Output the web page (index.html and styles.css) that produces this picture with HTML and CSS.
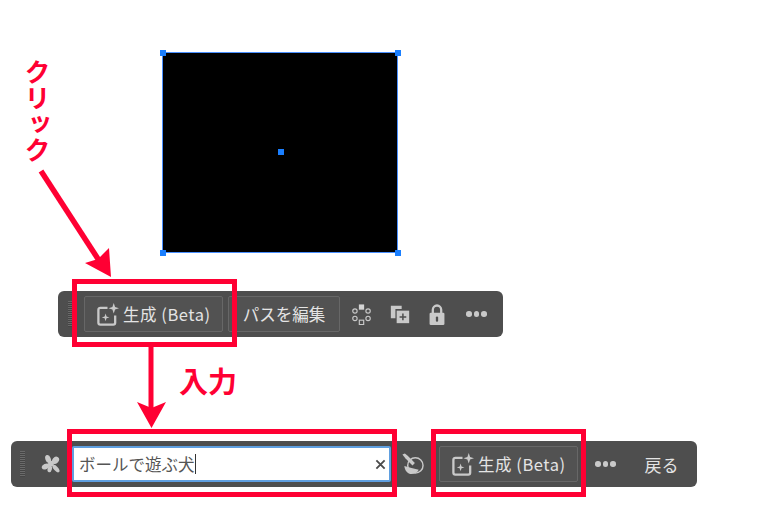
FILE: index.html
```html
<!DOCTYPE html>
<html lang="ja">
<head>
<meta charset="utf-8">
<title>生成 (Beta)</title>
<link rel="stylesheet" href="styles.css">
</head>
<body>
<main class="stage">
  <div class="artboard">
    <i class="handle tl"></i><i class="handle tr"></i><i class="handle bl"></i><i class="handle br"></i><i class="handle center"></i>
  </div>

  <div class="toolbar toolbar-top">
    <span class="grip"></span>
    <button class="btn btn-gen">
      <svg class="ico-gen" viewBox="0 0 24 24"><path d="M12 5H4.500A2 2 0 0 0 2.500 7v13.500a2 2 0 0 0 2 2h13.500a2 2 0 0 0 2-2V13" fill="none" stroke="#c9c9c9" stroke-width="2.400"/><path d="M18.500 0l1.400 4.100L24 5.500l-4.100 1.400L18.500 11l-1.400-4.100L13 5.500l4.100-1.400zM10 11l1 3 3 1-3 1-1 3-1-3-3-1 3-1z" fill="#c9c9c9"/></svg>
      <span>生成 (Beta)</span>
    </button>
    <button class="btn btn-path">パスを編集</button>
    <svg class="ico ico-ring" viewBox="0 0 24 24"><g fill="none" stroke="#c9c9c9" stroke-width="1.300"><circle cx="4.500" cy="8" r="2.500"/><circle cx="19.500" cy="8" r="2.500"/><circle cx="4.500" cy="16.500" r="2.500"/><circle cx="19.500" cy="16.500" r="2.500"/><rect x="9.500" y="18.500" width="5" height="5"/></g><rect x="9" y="0.500" width="6" height="6" fill="#d4d4d4"/></svg>
    <svg class="ico ico-copy" viewBox="0 0 24 24"><path d="M1 2h13v4H6.500v11H1z" fill="#c9c9c9"/><rect x="8" y="8" width="15" height="15" fill="#c9c9c9"/><path d="M15.500 11.500v8M11.500 15.500h8" stroke="#4e4e4e" stroke-width="1.800"/></svg>
    <svg class="ico ico-lock" viewBox="0 0 18 24"><path d="M4.200 11V6.500a4.800 4.800 0 0 1 9.600 0V11" fill="none" stroke="#c9c9c9" stroke-width="2.600"/><rect x="0.500" y="10" width="17" height="14" rx="1.500" fill="#c9c9c9"/><path d="M9 15.500v3.500" stroke="#4e4e4e" stroke-width="2.600" stroke-linecap="round"/></svg>
    <span class="dots"><i></i><i></i><i></i></span>
  </div>

  <div class="toolbar toolbar-bottom">
    <span class="grip"></span>
    <svg class="ico ico-flower" viewBox="0 0 24 24"><g fill="#c9c9c9"><ellipse cx="8.500" cy="6" rx="3.200" ry="5" transform="rotate(-20 8.500 6)"/><ellipse cx="17.500" cy="7.500" rx="3.800" ry="4.600" transform="rotate(40 17.500 7.500)"/><ellipse cx="5.500" cy="15" rx="3.200" ry="4.800" transform="rotate(65 5.500 15)"/><ellipse cx="18" cy="17.500" rx="2.600" ry="5.500" transform="rotate(-42 18 17.500)"/><ellipse cx="10.500" cy="18" rx="2.600" ry="4" transform="rotate(15 10.500 18)"/><circle cx="12" cy="11.500" r="3.500"/></g></svg>
    <label class="field">
      <span class="field-text">ボールで遊ぶ犬</span><span class="caret"></span>
      <svg class="clear" viewBox="0 0 12 12"><path d="M1.500 1.500l9 9M10.500 1.500l-9 9" stroke="#4a4a4a" stroke-width="2"/></svg>
    </label>
    <svg class="ico ico-brush" viewBox="0 0 24 24"><circle cx="15" cy="13.500" r="8" fill="none" stroke="#c9c9c9" stroke-width="1.500"/><path d="M3.500 14c5 1.500 10 3 15 4-1.500 3-4.500 4.500-7.500 4.500-4 0-7-3.500-7.500-8.500z" fill="#c9c9c9"/><path d="M1.500 2l2.500-1 3 2.500 7.500 7.500-2.500 2.500-7.500-7.500z" fill="#c9c9c9"/></svg>
    <button class="btn btn-gen btn-gen-2">
      <svg class="ico-gen" viewBox="0 0 24 24"><path d="M12 5H4.500A2 2 0 0 0 2.500 7v13.500a2 2 0 0 0 2 2h13.500a2 2 0 0 0 2-2V13" fill="none" stroke="#c9c9c9" stroke-width="2.400"/><path d="M18.500 0l1.400 4.100L24 5.500l-4.100 1.400L18.500 11l-1.400-4.100L13 5.500l4.100-1.400zM10 11l1 3 3 1-3 1-1 3-1-3-3-1 3-1z" fill="#c9c9c9"/></svg>
      <span>生成 (Beta)</span>
    </button>
    <span class="dots dots-2"><i></i><i></i><i></i></span>
    <span class="back">戻る</span>
  </div>

  <svg class="arrows" viewBox="0 0 768 519">
    <path d="M41 171L100 262" stroke="#ff0033" stroke-width="5.500" fill="none"/>
    <path d="M111 277L85 263L98 259L109 248z" fill="#ff0033"/>
    <path d="M151 347V410" stroke="#ff0033" stroke-width="5" fill="none"/>
    <path d="M151.500 428L137 402L151.500 408L166 402z" fill="#ff0033"/>
  </svg>
  <span class="mark mark-a"></span>
  <span class="mark mark-b"></span>
  <span class="mark mark-c"></span>
  <span class="note note-click">クリック</span>
  <span class="note note-input">入力</span>
</main>
</body>
</html>
```
FILE: styles.css
```css
* { box-sizing: border-box; }
html, body { margin: 0; padding: 0; background: #fff; }
body { width: 768px; height: 519px; overflow: hidden; font-family: "Noto Sans CJK JP", "Liberation Sans", sans-serif; }
.stage { position: relative; width: 768px; height: 519px; padding-top: 52px; }

.artboard { position: relative; width: 236px; height: 201px; margin: 0 0 0 162px; background: #000; border: 1.500px solid #4a90ff; }
.handle { position: absolute; width: 6px; height: 6px; background: #1a7fff; }
.tl { left: -3.500px; top: -3.500px; }
.tr { right: -3.500px; top: -3.500px; }
.bl { left: -3.500px; bottom: -3.500px; }
.br { right: -3.500px; bottom: -3.500px; }
.center { left: 114.500px; top: 95.500px; }

.toolbar { display: flex; align-items: center; background: #4e4e4e; border-radius: 6px; height: 46px; color: #e4e4e4; }
.toolbar-top { width: 445px; margin: 38px 0 0 58px; padding-left: 10px; }
.toolbar-bottom { width: 686px; margin: 104px 0 0 11px; padding-left: 9px; }

.grip { width: 5px; height: 26px; background: repeating-linear-gradient(#6a6a6a 0 1px, #454545 1px 2px); flex: none; }

.btn { display: flex; align-items: center; justify-content: center; height: 36px; padding: 0; background: #525252; border: 1px solid #676767; border-radius: 2px; color: #e4e4e4; font: 400 16.500px "Noto Sans CJK JP", sans-serif; flex: none; }
.btn-gen { width: 139px; gap: 4px; margin-left: 11px; letter-spacing: .55px; justify-content: flex-start; padding-left: 11px; }
.btn-path { width: 112px; margin-left: 5px; }
.btn-gen-2 { margin-left: 15px; }
.ico-gen { width: 23px; height: 23px; flex: none; }

.ico { flex: none; display: block; }
.ico-ring { width: 21px; height: 21px; margin-left: 11px; }
.ico-copy { width: 20px; height: 20px; margin-left: 18px; }
.ico-lock { width: 16px; height: 21px; margin-left: 19px; }
.ico-flower { width: 20px; height: 20px; margin-left: 16px; }
.ico-brush { width: 23px; height: 24px; margin-left: 10px; }

.dots { display: flex; gap: 2px; margin-left: 21px; flex: none; }
.dots i { width: 5.500px; height: 5.500px; border-radius: 50%; background: #c9c9c9; }
.dots-2 { margin-left: 17px; }
.back { margin-left: 29px; font-size: 17px; color: #e4e4e4; flex: none; }

.field { display: flex; align-items: center; width: 319px; height: 36px; margin-left: 11px; padding: 0 3px 0 5px; background: #fff; border: 2px solid #5f9fe0; border-radius: 2px; color: #555; font-size: 16.500px; flex: none; }
.caret { width: 1px; height: 20px; background: #333; }
.clear { width: 11px; height: 11px; margin-left: auto; }

.arrows { position: absolute; inset: 0; width: 768px; height: 519px; pointer-events: none; }
.mark { position: absolute; border: 5px solid #ff0033; }
.mark-a { left: 72px; top: 279px; width: 165px; height: 68px; }
.mark-b { left: 67px; top: 429px; width: 330px; height: 68px; }
.mark-c { left: 431px; top: 429px; width: 155px; height: 68px; }

.note { position: absolute; color: #ff0033; font-weight: 700; line-height: 1; white-space: nowrap; }
.note-click { left: 24px; top: 59px; font-size: 26px; writing-mode: vertical-rl; }
.note-input { left: 179px; top: 366px; font-size: 29px; }
```
